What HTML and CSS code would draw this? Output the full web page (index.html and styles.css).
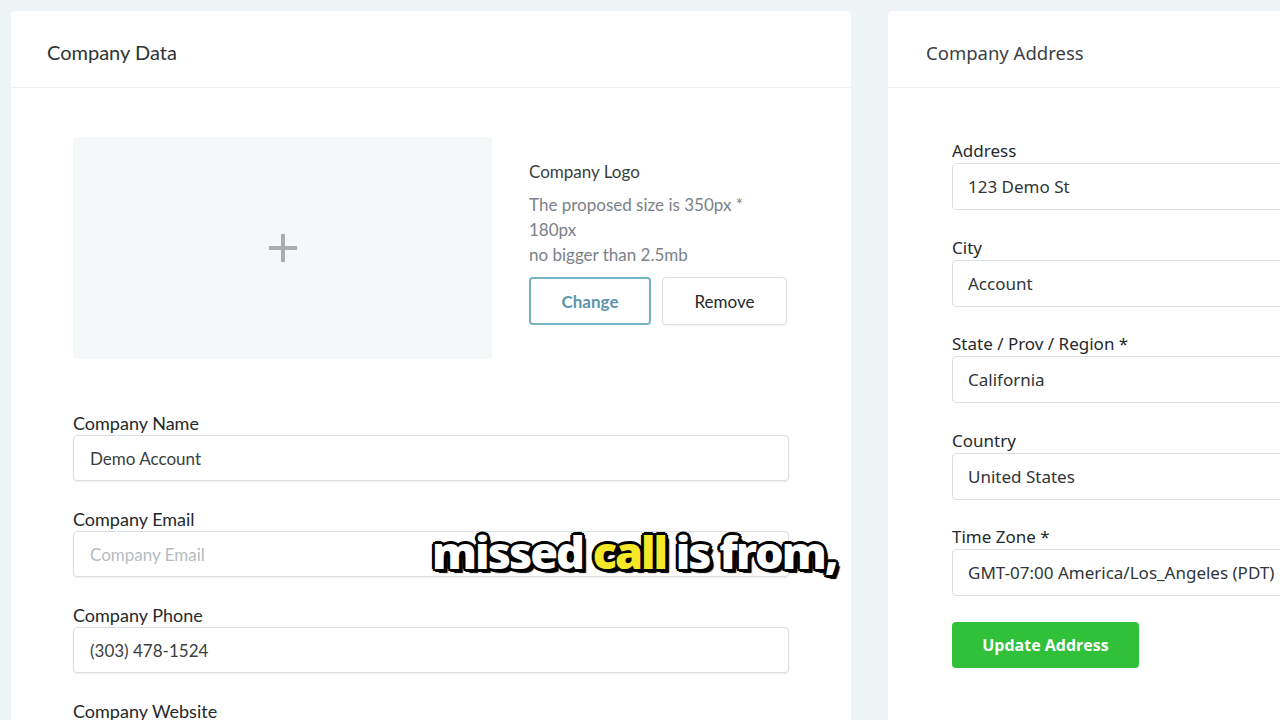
FILE: index.html
```html
<!DOCTYPE html>
<html>
<head>
<meta charset="utf-8">
<link rel="stylesheet" href="styles.css">
</head>
<body>
<div class="page">
  <section class="card card-left">
    <header class="card-head">Company Data</header>
    <div class="card-body left-body">
      <div class="logo-row">
        <div class="logo-box">
          <svg width="32" height="32" viewBox="0 0 32 32"><path d="M16 2v28M2 16h28" stroke="#a9adaf" stroke-width="4" fill="none"/></svg>
        </div>
        <div class="logo-info">
          <div class="logo-title">Company Logo</div>
          <div class="logo-hint">The proposed size is 350px *<br>180px<br>no bigger than 2.5mb</div>
          <div class="logo-btns">
            <button class="btn btn-change">Change</button>
            <button class="btn btn-remove">Remove</button>
          </div>
        </div>
      </div>
      <div class="field">
        <label>Company Name</label>
        <div class="input">Demo Account</div>
      </div>
      <div class="field">
        <label>Company Email</label>
        <div class="input placeholder">Company Email</div>
      </div>
      <div class="field">
        <label>Company Phone</label>
        <div class="input">(303) 478-1524</div>
      </div>
      <div class="field">
        <label>Company Website</label>
        <div class="input"></div>
      </div>
    </div>
  </section>
  <section class="card card-right">
    <header class="card-head">Company Address</header>
    <div class="card-body right-body">
      <div class="rfield"><label>Address</label><div class="rinput">123 Demo St</div></div>
      <div class="rfield"><label>City</label><div class="rinput">Account</div></div>
      <div class="rfield"><label>State / Prov / Region *</label><div class="rinput">California</div></div>
      <div class="rfield"><label>Country</label><div class="rinput">United States</div></div>
      <div class="rfield"><label>Time Zone *</label><div class="rinput">GMT-07:00 America/Los_Angeles (PDT)</div></div>
      <button class="btn-update">Update Address</button>
    </div>
  </section>
</div>
<div class="caption">missed <span class="hl">call</span> is from,</div>
</body>
</html>
```
FILE: styles.css
```css
html, body {
  margin: 0;
  padding: 0;
  width: 1280px;
  height: 720px;
  overflow: hidden;
  background: #eef4f6;
}
.page {
  display: flex;
  gap: 37px;
  padding: 11px 0 0 11px;
  width: 1600px;
  height: 709px;
  overflow: hidden;
}
.card {
  background: #fff;
  border-radius: 4px;
  height: 760px;
}
.card-left {
  width: 840px;
  flex: none;
  font-family: "Lato", "Open Sans", sans-serif;
}
.card-right {
  width: 560px;
  flex: none;
  font-family: "Noto Sans", "Open Sans", sans-serif;
}
.card-head {
  height: 77px;
  box-sizing: border-box;
  border-bottom: 1px solid #eef1f3;
  display: flex;
  align-items: center;
  padding-top: 6px;
  font-size: 20px;
  color: #2d3436;
}
.card-left .card-head { padding-left: 36px; }
.card-right .card-head { padding-left: 38px; font-size: 18.5px; color: #3b4044; }

.left-body { padding: 49px 62px 0 62px; }
.logo-row { display: flex; gap: 37px; }
.logo-box {
  width: 419px;
  height: 222px;
  background: #f4f8f9;
  border-radius: 4px;
  display: flex;
  align-items: center;
  justify-content: center;
}
.logo-info { padding-top: 22px; }
.logo-title { font-size: 17px; color: #3a3f42; line-height: 25px; }
.logo-hint { font-size: 17px; color: #7b8287; line-height: 25px; margin-top: 8px; }
.logo-btns { display: flex; gap: 11px; margin-top: 10px; }
.btn {
  height: 48px;
  border-radius: 4px;
  background: #fff;
  font-family: inherit;
  font-size: 17px;
  box-sizing: border-box;
}
.btn-change { width: 122px; border: 2px solid #74b2c4; color: #5b96ad; font-weight: 700; }
.btn-remove { width: 125px; border: 1px solid #dcdfe1; color: #25292b; box-shadow: 0 1px 2px rgba(0,0,0,0.06); }

.field { margin-top: 52px; }
.field + .field { margin-top: 26px; }
.field label { display: block; font-size: 18px; color: #25292b; line-height: 24px; margin-bottom: 0; }
.input {
  width: 716px;
  height: 46px;
  box-sizing: border-box;
  border: 1px solid #dcdfe1;
  border-radius: 4px;
  box-shadow: 0 1px 2px rgba(0,0,0,0.08);
  padding: 0 16px;
  display: flex;
  align-items: center;
  font-size: 17px;
  color: #3a3f42;
}
.input.placeholder { color: #b6bcc0; }

.right-body { padding: 51px 0 0 64px; }
.rfield { margin-bottom: 25.5px; }
.rfield label { display: block; font-size: 17px; color: #25292b; line-height: 24px; margin-bottom: 0; }
.rinput {
  width: 460px;
  height: 47px;
  box-sizing: border-box;
  border: 1px solid #dcdfe1;
  border-radius: 4px;
  padding: 0 15px;
  display: flex;
  align-items: center;
  font-size: 17px;
  color: #303538;
  white-space: nowrap;
}
.btn-update {
  margin-top: 0;
  width: 187px;
  height: 46px;
  border: none;
  border-radius: 4px;
  background: #30c03a;
  color: #fff;
  font-family: "Open Sans", sans-serif;
  font-weight: 700;
  font-size: 16px;
}
.caption {
  position: absolute;
  left: 432px;
  top: 524px;
  font-family: "Open Sans", sans-serif;
  font-weight: 800;
  font-size: 45px;
  letter-spacing: -2px;
  color: #fff;
  text-shadow: 0 0 3px #000, 2px 2px 0 #000, -2px -2px 0 #000, 2px -2px 0 #000, -2px 2px 0 #000, 3px 0 0 #000, -3px 0 0 #000, 0 3px 0 #000, 0 -3px 0 #000, 3px 3px 1px #000, 4px 4px 1px #000;
  line-height: 56px;
  white-space: nowrap;
}
.caption .hl { color: #f6e828; }
```
